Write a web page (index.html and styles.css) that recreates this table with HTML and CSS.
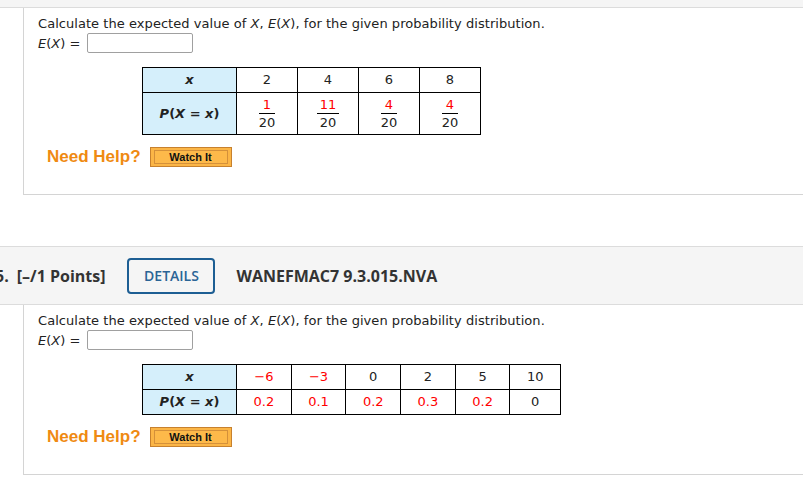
FILE: index.html
```html
<!DOCTYPE html>
<html>
<head>
<meta charset="utf-8">
<link rel="stylesheet" href="styles.css">
</head>
<body>
<div class="prev-band"></div>
<div class="card">
  <p class="prompt">Calculate the expected value of <i>X</i>, <i>E</i>(<i>X</i>), for the given probability distribution.</p>
  <div class="answer-row"><span class="ex"><i>E</i>(<i>X</i>) =</span><span class="answer-box"></span></div>
  <table class="dist dist-frac">
    <tr>
      <th><i>x</i></th>
      <td>2</td><td>4</td><td>6</td><td>8</td>
    </tr>
    <tr class="prob-row">
      <th><i>P</i>(<i>X</i> = <i>x</i>)</th>
      <td><span class="frac"><span class="num">1</span><span class="den">20</span></span></td>
      <td><span class="frac"><span class="num">11</span><span class="den">20</span></span></td>
      <td><span class="frac"><span class="num">4</span><span class="den">20</span></span></td>
      <td><span class="frac"><span class="num">4</span><span class="den">20</span></span></td>
    </tr>
  </table>
  <div class="help-row"><span class="need-help">Need Help?</span><span class="watch-btn"><span class="watch-inner">Watch It</span></span></div>
</div>

<div class="band">
  <span class="qnum">5.</span>
  <span class="points">[–/1 Points]</span>
  <span class="details-btn">DETAILS</span>
  <span class="qid">WANEFMAC7 9.3.015.NVA</span>
</div>
<div class="card">
  <p class="prompt">Calculate the expected value of <i>X</i>, <i>E</i>(<i>X</i>), for the given probability distribution.</p>
  <div class="answer-row"><span class="ex"><i>E</i>(<i>X</i>) =</span><span class="answer-box"></span></div>
  <table class="dist">
    <tr>
      <th><i>x</i></th>
      <td class="red">−6</td><td class="red">−3</td><td>0</td><td>2</td><td>5</td><td>10</td>
    </tr>
    <tr>
      <th><i>P</i>(<i>X</i> = <i>x</i>)</th>
      <td class="red">0.2</td><td class="red">0.1</td><td class="red">0.2</td><td class="red">0.3</td><td class="red">0.2</td><td>0</td>
    </tr>
  </table>
  <div class="help-row"><span class="need-help">Need Help?</span><span class="watch-btn"><span class="watch-inner">Watch It</span></span></div>
</div>
</body>
</html>
```

FILE: styles.css
```css
html, body {
  margin: 0;
  padding: 0;
  background: #fff;
}
body {
  font-family: "DejaVu Sans", Verdana, sans-serif;
  font-size: 13px;
  color: #222;
  overflow: hidden;
}
.prev-band {
  height: 7px;
  background: #f5f5f5;
  border-bottom: 1px solid #dcdcdc;
}
.card {
  margin-left: 23px;
  border-left: 1px solid #d4d4d4;
  border-bottom: 1px solid #d4d4d4;
  padding: 7px 0 27px 14px;
}
.prompt {
  margin: 0;
  line-height: 18px;
  letter-spacing: 0.05px;
}
.answer-row {
  display: flex;
  align-items: center;
  height: 20px;
}
.ex {
  margin-right: 7px;
}
.answer-box {
  display: inline-block;
  width: 104px;
  height: 18px;
  border: 1px solid #a0a0a0;
  border-radius: 2px;
  background: #fff;
}
.dist {
  border-collapse: collapse;
  margin: 14px 0 0 104px;
}
.dist th, .dist td {
  border: 1px solid #000;
  text-align: center;
  padding: 0 16.5px;
  height: 24px;
  line-height: 16px;
}
.dist th {
  background: #d5effb;
  font-weight: bold;
  white-space: nowrap;
  width: 60px;
}
.dist-frac td {
  width: 27px;
}
.dist-frac .prob-row th,
.dist-frac .prob-row td {
  height: 41px;
}
.red {
  color: #f00;
}
.frac {
  display: inline-flex;
  flex-direction: column;
  align-items: stretch;
  vertical-align: middle;
  padding-top: 1px;
}
.num {
  color: #f00;
  padding: 0 3px;
  line-height: 16px;
}
.den {
  border-top: 1px solid #000;
  line-height: 16px;
  padding-top: 1px;
}
.help-row {
  display: flex;
  align-items: center;
  margin-top: 12px;
  margin-left: 9px;
}
.need-help {
  font-family: "Liberation Sans", Arial, sans-serif;
  font-weight: bold;
  font-size: 17px;
  color: #ef8a12;
  margin-right: 9px;
}
.watch-btn {
  display: inline-flex;
  box-sizing: border-box;
  width: 82px;
  height: 20px;
  border: 1px solid #c7812e;
  background: #fbb546;
  padding: 2px 3px;
}
.watch-inner {
  flex: 1;
  display: flex;
  align-items: center;
  justify-content: center;
  border: 1px solid #d4903a;
  background: #fdb94a;
  font-family: "Liberation Sans", Arial, sans-serif;
  font-weight: bold;
  font-size: 11px;
  color: #111;
}
.band {
  margin-top: 51px;
  height: 57px;
  background: #f5f5f5;
  border-top: 1px solid #dcdcdc;
  border-bottom: 1px solid #dcdcdc;
  display: flex;
  align-items: center;
  font-family: "Open Sans", sans-serif;
  font-weight: bold;
  font-size: 16px;
  color: #333;
}
.qnum {
  margin-left: -5px;
  margin-right: 8px;
}
.points {
  margin-right: 22px;
}
.details-btn {
  box-sizing: border-box;
  width: 88px;
  height: 36px;
  border: 2px solid #1d5e93;
  border-radius: 4px;
  display: flex;
  align-items: center;
  justify-content: center;
  font-size: 14px;
  font-weight: 600;
  color: #2a6496;
  margin-right: 21px;
}
.qid {
  color: #333;
}
```
